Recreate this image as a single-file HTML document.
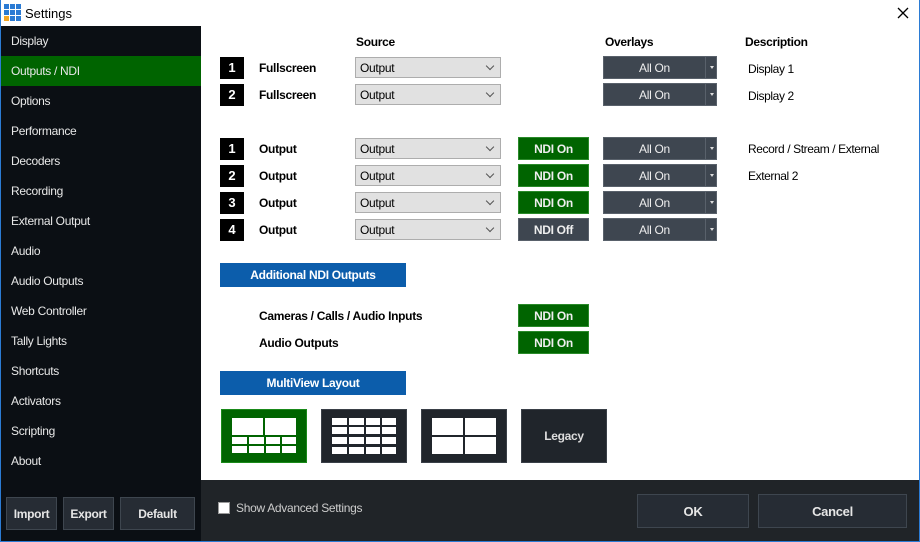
<!DOCTYPE html>
<html><head><style>
*{margin:0;padding:0;box-sizing:border-box}
body{width:920px;height:542px;position:relative;background:#fff;font-family:"Liberation Sans",sans-serif;overflow:hidden}
.a{position:absolute}
.win{left:0;top:0;width:920px;height:542px;border:1px solid #2b7bd4;border-top:none}
.side{left:1px;top:26px;width:200px;height:515px;background:#0b0f14}
.it{position:absolute;left:0;width:200px;height:30px;color:#e8e8e8;font-size:12px;line-height:30px;padding-left:10px;letter-spacing:-0.3px}
.num{width:24px;height:22px;background:#000;color:#fff;font-weight:bold;font-size:13px;text-align:center;line-height:22px}
.lbl{font-weight:bold;font-size:12px;color:#000;letter-spacing:-0.3px}
.dd{width:146px;height:21px;background:#e1e1e1;border:1px solid #adadad;font-size:12px;line-height:20px;padding-left:4px;color:#000;letter-spacing:-0.3px}
.dd:after{content:"";position:absolute;right:7px;top:5px;width:5px;height:5px;border-right:1px solid #555;border-bottom:1px solid #555;transform:rotate(45deg)}
.ov{width:114px;height:23px;background:#3e4650;border:1px solid #59616b;color:#eee;font-size:12px;line-height:22px}
.ov span{position:absolute;left:0;width:101px;text-align:center;letter-spacing:-0.3px}
.ov i{position:absolute;left:101px;top:0;width:1px;height:21px;background:#59616b}
.ov b{position:absolute;left:106px;top:9px;border:2px solid transparent;border-top:3px solid #ddd}
.ndi{width:71px;height:23px;background:#006400;border:1px solid #2a8a2a;color:#eee;font-weight:bold;font-size:12px;text-align:center;line-height:22px;letter-spacing:-0.3px}
.off{background:#3e4650;border-color:#59616b}
.desc{font-size:12px;color:#000;letter-spacing:-0.4px}
.blue{width:186px;height:24px;background:#0c5dab;color:#fff;font-weight:bold;font-size:12px;text-align:center;line-height:24px;letter-spacing:-0.3px}
.tile{width:86px;height:54px;background:#20252b;border:1px solid #3a4048}
.btn{background:#262c34;border:1px solid #3e464f;color:#e6e6e6;font-weight:bold;font-size:12px;text-align:center;letter-spacing:-0.3px}
.w{position:absolute;background:#fff}
</style></head><body>
<div class="a" style="left:0;top:0;width:920px;height:26px;background:#fff"></div>
<svg class="a" style="left:4px;top:4px" width="17" height="17"><g fill="#2b7bd4"><rect x="0" y="0" width="5" height="5"/><rect x="6" y="0" width="5" height="5"/><rect x="12" y="0" width="5" height="5"/><rect x="6" y="6" width="5" height="5"/><rect x="12" y="6" width="5" height="5"/><rect x="0" y="6" width="5" height="5"/><rect x="6" y="12" width="5" height="5"/><rect x="12" y="12" width="5" height="5"/></g><rect x="0" y="12" width="5" height="5" fill="#f5a623"/></svg>
<div class="a" style="left:25px;top:6px;font-size:13px;color:#000">Settings</div>
<svg class="a" style="left:897px;top:7px" width="12" height="12"><path d="M1 1L11 11M11 1L1 11" stroke="#000" stroke-width="1.3"/></svg>
<div class="a side">
<div class="it" style="top:0">Display</div>
<div class="it" style="top:30px;background:#006400">Outputs / NDI</div>
<div class="it" style="top:60px">Options</div>
<div class="it" style="top:90px">Performance</div>
<div class="it" style="top:120px">Decoders</div>
<div class="it" style="top:150px">Recording</div>
<div class="it" style="top:180px">External Output</div>
<div class="it" style="top:210px">Audio</div>
<div class="it" style="top:240px">Audio Outputs</div>
<div class="it" style="top:270px">Web Controller</div>
<div class="it" style="top:300px">Tally Lights</div>
<div class="it" style="top:330px">Shortcuts</div>
<div class="it" style="top:360px">Activators</div>
<div class="it" style="top:390px">Scripting</div>
<div class="it" style="top:420px">About</div>
</div>
<div class="a btn" style="left:6px;top:497px;width:51px;height:33px;line-height:33px">Import</div>
<div class="a btn" style="left:63px;top:497px;width:51px;height:33px;line-height:33px">Export</div>
<div class="a btn" style="left:120px;top:497px;width:75px;height:33px;line-height:33px">Default</div>

<div class="a lbl" style="left:356px;top:35px">Source</div>
<div class="a lbl" style="left:605px;top:35px">Overlays</div>
<div class="a lbl" style="left:745px;top:35px">Description</div>

<div class="a num" style="left:220px;top:57px">1</div><div class="a lbl" style="left:259px;top:61px">Fullscreen</div><div class="a dd" style="left:355px;top:57px">Output</div>
<div class="a ov" style="left:603px;top:56px"><span>All On</span><i></i><b></b></div><div class="a desc" style="left:748px;top:62px">Display 1</div>
<div class="a num" style="left:220px;top:84px">2</div><div class="a lbl" style="left:259px;top:88px">Fullscreen</div><div class="a dd" style="left:355px;top:84px">Output</div>
<div class="a ov" style="left:603px;top:83px"><span>All On</span><i></i><b></b></div><div class="a desc" style="left:748px;top:89px">Display 2</div>

<div class="a num" style="left:220px;top:138px">1</div><div class="a lbl" style="left:259px;top:142px">Output</div><div class="a dd" style="left:355px;top:138px">Output</div><div class="a ndi" style="left:518px;top:137px">NDI On</div>
<div class="a ov" style="left:603px;top:137px"><span>All On</span><i></i><b></b></div><div class="a desc" style="left:748px;top:142px">Record / Stream / External</div>
<div class="a num" style="left:220px;top:165px">2</div><div class="a lbl" style="left:259px;top:169px">Output</div><div class="a dd" style="left:355px;top:165px">Output</div><div class="a ndi" style="left:518px;top:164px">NDI On</div>
<div class="a ov" style="left:603px;top:164px"><span>All On</span><i></i><b></b></div><div class="a desc" style="left:748px;top:169px">External 2</div>
<div class="a num" style="left:220px;top:192px">3</div><div class="a lbl" style="left:259px;top:196px">Output</div><div class="a dd" style="left:355px;top:192px">Output</div><div class="a ndi" style="left:518px;top:191px">NDI On</div>
<div class="a ov" style="left:603px;top:191px"><span>All On</span><i></i><b></b></div>
<div class="a num" style="left:220px;top:219px">4</div><div class="a lbl" style="left:259px;top:223px">Output</div><div class="a dd" style="left:355px;top:219px">Output</div><div class="a ndi off" style="left:518px;top:218px">NDI Off</div>
<div class="a ov" style="left:603px;top:218px"><span>All On</span><i></i><b></b></div>

<div class="a blue" style="left:220px;top:263px">Additional NDI Outputs</div>
<div class="a lbl" style="left:259px;top:309px">Cameras / Calls / Audio Inputs</div><div class="a ndi" style="left:518px;top:304px">NDI On</div>
<div class="a lbl" style="left:259px;top:336px">Audio Outputs</div><div class="a ndi" style="left:518px;top:331px">NDI On</div>
<div class="a blue" style="left:220px;top:371px">MultiView Layout</div>

<div class="a tile" style="left:221px;top:409px;background:#006400;border-color:#1a8a1a">
<div class="w" style="left:10px;top:8px;width:31px;height:17px"></div><div class="w" style="left:43px;top:8px;width:31px;height:17px"></div>
<div class="w" style="left:10px;top:27px;width:15px;height:7px"></div><div class="w" style="left:27px;top:27px;width:15px;height:7px"></div><div class="w" style="left:44px;top:27px;width:14px;height:7px"></div><div class="w" style="left:60px;top:27px;width:14px;height:7px"></div>
<div class="w" style="left:10px;top:36px;width:15px;height:7px"></div><div class="w" style="left:27px;top:36px;width:15px;height:7px"></div><div class="w" style="left:44px;top:36px;width:14px;height:7px"></div><div class="w" style="left:60px;top:36px;width:14px;height:7px"></div>
</div>
<div class="a tile" style="left:321px;top:409px">
<svg class="a" style="left:10px;top:8px" width="66" height="36" fill="#fff"><g id="r"><rect x="0" y="0" width="15" height="7"/><rect x="17" y="0" width="15" height="7"/><rect x="34" y="0" width="14" height="7"/><rect x="50" y="0" width="14" height="7"/></g><use href="#r" y="9"/><use href="#r" y="19"/><use href="#r" y="29"/></svg>
</div>
<div class="a tile" style="left:421px;top:409px">
<div class="w" style="left:10px;top:8px;width:31px;height:17px"></div><div class="w" style="left:43px;top:8px;width:31px;height:17px"></div>
<div class="w" style="left:10px;top:27px;width:31px;height:17px"></div><div class="w" style="left:43px;top:27px;width:31px;height:17px"></div>
</div>
<div class="a tile" style="left:521px;top:409px;color:#ddd;font-weight:bold;font-size:12px;text-align:center;line-height:52px;letter-spacing:-0.3px">Legacy</div>

<div class="a" style="left:201px;top:480px;width:718px;height:61px;background:#202428"></div>
<div class="a" style="left:218px;top:502px;width:12px;height:12px;background:#fff;border:1px solid #999"></div>
<div class="a" style="left:236px;top:501px;font-size:12px;color:#ccc;letter-spacing:-0.3px">Show Advanced Settings</div>
<div class="a btn" style="left:637px;top:494px;width:112px;height:34px;line-height:34px;font-size:13px">OK</div>
<div class="a btn" style="left:758px;top:494px;width:149px;height:34px;line-height:34px;font-size:13px">Cancel</div>
<div class="a win"></div>
</body></html>
